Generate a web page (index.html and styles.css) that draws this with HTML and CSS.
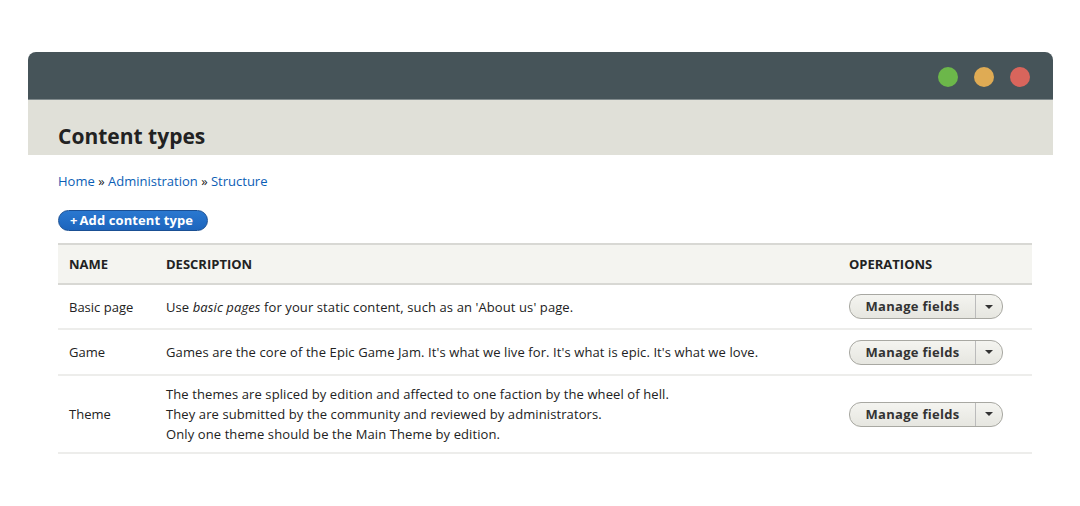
FILE: index.html
```html
<!DOCTYPE html>
<html>
<head>
<meta charset="utf-8">
<link rel="stylesheet" href="styles.css">
</head>
<body>
<div class="window">
  <div class="titlebar">
    <span class="dot green"></span>
    <span class="dot orange"></span>
    <span class="dot red"></span>
  </div>
  <div class="header">
    <h1>Content types</h1>
  </div>
  <div class="content">
    <nav class="breadcrumb"><a>Home</a> » <a>Administration</a> » <a>Structure</a></nav>
    <a class="add-btn"><span class="plus">+</span>Add content type</a>
    <table class="types">
      <colgroup><col class="col-name"><col class="col-desc"><col class="col-ops"></colgroup>
      <thead>
        <tr><th>Name</th><th>Description</th><th>Operations</th></tr>
      </thead>
      <tbody>
        <tr class="r1">
          <td>Basic page</td>
          <td>Use <em>basic pages</em> for your static content, such as an 'About us' page.</td>
          <td><div class="split"><span class="main">Manage fields</span><span class="arrow"><span class="tri"></span></span></div></td>
        </tr>
        <tr class="r2">
          <td>Game</td>
          <td>Games are the core of the Epic Game Jam. It's what we live for. It's what is epic. It's what we love.</td>
          <td><div class="split"><span class="main">Manage fields</span><span class="arrow"><span class="tri"></span></span></div></td>
        </tr>
        <tr class="r3">
          <td>Theme</td>
          <td>The themes are spliced by edition and affected to one faction by the wheel of hell.<br>They are submitted by the community and reviewed by administrators.<br>Only one theme should be the Main Theme by edition.</td>
          <td><div class="split"><span class="main">Manage fields</span><span class="arrow"><span class="tri"></span></span></div></td>
        </tr>
      </tbody>
    </table>
  </div>
</div>
</body>
</html>
```
FILE: styles.css
```css
html, body { margin: 0; padding: 0; background: #fff; }
body {
  font-family: "Open Sans", "DejaVu Sans", sans-serif;
  font-size: 13px;
  color: #222;
  padding: 52px 27px 0 28px;
}
.window { width: 1025px; }
.titlebar {
  height: 47px;
  background: #465459;
  border-radius: 8px 8px 0 0;
  border-bottom: 1px solid #808a8c;
  display: flex;
  justify-content: flex-end;
  align-items: center;
  gap: 16px;
  padding-right: 23px;
}
.dot { width: 20px; height: 20px; border-radius: 50%; display: block; margin-top: 2px; }
.green { background: #6cb74a; }
.orange { background: #dfab54; }
.red { background: #d9655c; }
.header {
  background: #e0e0d8;
  height: 55px;
  padding-left: 30px;
}
.header h1 {
  margin: 0;
  padding-top: 22px;
  font-size: 21px;
  font-weight: 700;
  color: #222;
  line-height: 28px;
}
.content { padding: 16px 21px 0 30px; }
.breadcrumb { line-height: 20px; color: #222; }
.breadcrumb a { color: #0b5eb5; }
.add-btn {
  display: inline-block;
  margin-top: 19px;
  height: 19px;
  line-height: 18px;
  padding: 0 14px 0 11px;
  border: 1px solid #1a4f93;
  border-radius: 11px;
  background: linear-gradient(#2a78d0, #1d65bd);
  color: #fff;
  font-weight: 700;
  font-size: 13px;
  letter-spacing: 0.1px;
}
.add-btn .plus { margin-right: 2px; }
.types {
  margin-top: 12px;
  width: 974px;
  border-collapse: collapse;
  table-layout: fixed;
}
.col-name { width: 97px; }
.col-desc { width: 683px; }
.col-ops { width: 194px; }
.types th {
  text-align: left;
  text-transform: uppercase;
  font-weight: 700;
  background: #f4f4f0;
  border-top: 2px solid #d8d8d4;
  border-bottom: 2px solid #d8d8d4;
  height: 38px;
  padding: 0 11px;
  font-size: 13px;
}
.types td {
  padding: 0 11px;
  border-bottom: 2px solid #ededeb;
  line-height: 20px;
  vertical-align: middle;
  white-space: nowrap;
}
.r1 td { height: 43px; }
.r2 td { height: 44px; }
.r3 td { height: 76px; }
.types td:nth-child(2) { letter-spacing: 0.1px; }
.split {
  display: flex;
  width: 152px;
  height: 23px;
  border: 1px solid #a8a8a2;
  border-radius: 12px;
  background: linear-gradient(#f4f4f0, #e6e6e0);
  overflow: hidden;
}
.split .main {
  flex: 1;
  text-align: center;
  font-weight: 700;
  line-height: 23px;
  color: #333;
  border-right: 1px solid #bbb;
  letter-spacing: 0.3px;
}
.split .arrow {
  width: 26px;
  display: flex;
  align-items: center;
  justify-content: center;
}
.tri {
  width: 0; height: 0;
  border-left: 4px solid transparent;
  border-right: 4px solid transparent;
  border-top: 4px solid #333;
}
```
